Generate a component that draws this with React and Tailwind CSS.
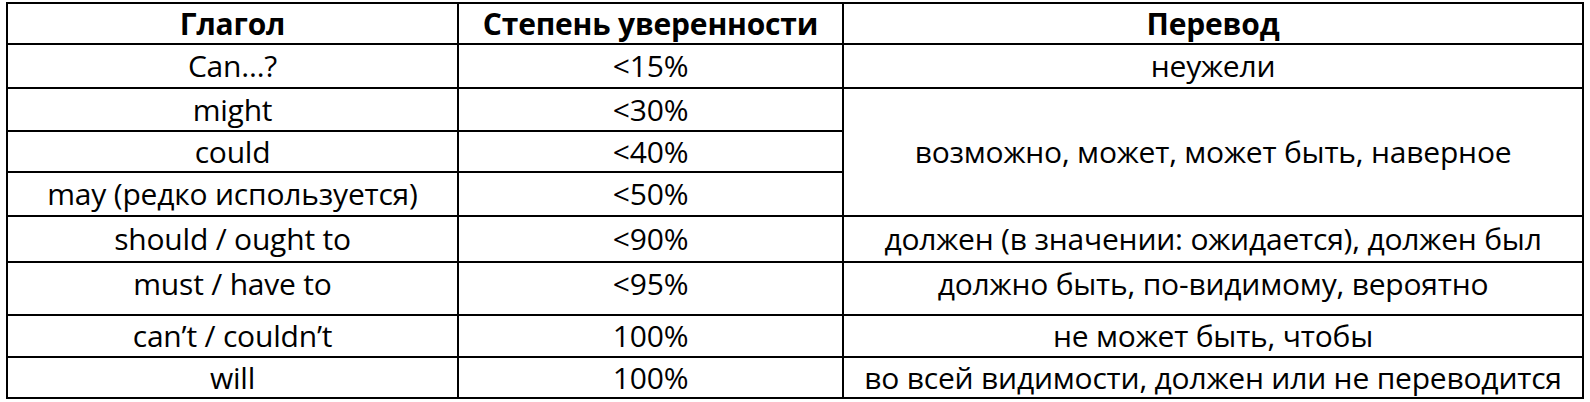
import React from "react";

const rows = [
  { verb: "Can…?", degree: "<15%", tr: "неужели" },
  { verb: "might", degree: "<30%", tr: "возможно, может, может быть, наверное", span: true },
  { verb: "could", degree: "<40%" },
  { verb: "may (редко используется)", degree: "<50%" },
  { verb: "should / ought to", degree: "<90%", tr: "должен (в значении: ожидается), должен был" },
  { verb: "must / have to", degree: "<95%", tr: "должно быть, по-видимому, вероятно", shift: true },
  { verb: "can’t / couldn’t", degree: "100%", tr: "не может быть, чтобы" },
  { verb: "will", degree: "100%", tr: "во всей видимости, должен или не переводится" },
];

function Cell({ children, className = "" }) {
  return (
    <div className={"bg-white flex items-center justify-center whitespace-nowrap leading-none " + className}>
      {children}
    </div>
  );
}

export default function App() {
  return (
    <div className="w-[1590px] h-[402px] bg-white pl-[6px] pt-[2px]" style={{ fontFamily: '"Open Sans", sans-serif' }}>
      <div className="inline-grid bg-black p-[2px] gap-[2px] grid-cols-[449px_383px_738px] grid-rows-[39px_42px_41px_39px_42px_44px_51px_40px_39px] text-[30px] tracking-[-0.2px] text-black">
        <Cell className="font-bold">Глагол</Cell>
        <Cell className="font-bold">Степень уверенности</Cell>
        <Cell className="font-bold">Перевод</Cell>
        {rows.map((r, i) => (
          <React.Fragment key={i}>
            <Cell className={r.shift ? "pb-[10px]" : ""}>{r.verb}</Cell>
            <Cell className={r.shift ? "pb-[10px]" : ""}>{r.degree}</Cell>
            {r.tr && (
              <Cell className={(r.span ? "row-span-3 " : "") + (r.shift ? "pb-[10px]" : "")}>{r.tr}</Cell>
            )}
          </React.Fragment>
        ))}
      </div>
    </div>
  );
}
